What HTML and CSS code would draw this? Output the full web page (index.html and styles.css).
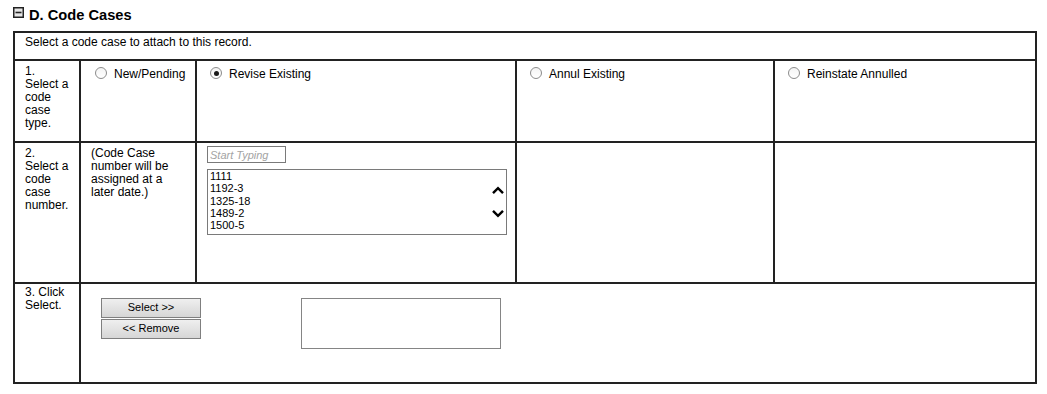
FILE: index.html
```html
<!DOCTYPE html>
<html>
<head>
<meta charset="utf-8">
<link rel="stylesheet" href="styles.css">
</head>
<body>
<div class="heading">
  <svg class="toggle" width="11" height="11" viewBox="0 0 11 11"><rect x="0.75" y="0.75" width="9.5" height="9.5" fill="#e6e6e6" stroke="#222" stroke-width="1.5"/><line x1="2.5" y1="5.5" x2="8.5" y2="5.5" stroke="#222" stroke-width="1.6"/></svg>
  <span>D. Code Cases</span>
</div>
<div class="grid">
  <div class="cell intro">Select a code case to attach to this record.</div>

  <div class="cell label">1.<br>Select a<br>code<br>case<br>type.</div>
  <div class="cell opt first"><label class="radio"><span class="dot"></span><span class="txt">New/Pending</span></label></div>
  <div class="cell opt"><label class="radio"><span class="dot checked"></span><span class="txt">Revise Existing</span></label></div>
  <div class="cell opt"><label class="radio"><span class="dot"></span><span class="txt">Annul Existing</span></label></div>
  <div class="cell opt"><label class="radio"><span class="dot"></span><span class="txt">Reinstate Annulled</span></label></div>

  <div class="cell label">2.<br>Select a<br>code<br>case<br>number.</div>
  <div class="cell label note">(Code Case<br>number will be<br>assigned at a<br>later date.)</div>
  <div class="cell pick">
    <input class="search" type="text" placeholder="Start Typing">
    <div class="list">
      <div class="items">
        <div>1111</div>
        <div>1192-3</div>
        <div>1325-18</div>
        <div>1489-2</div>
        <div>1500-5</div>
      </div>
      <div class="arrows">
        <svg width="12" height="9" viewBox="0 0 12 9"><polyline points="1,7.2 6,2.2 11,7.2" fill="none" stroke="#000" stroke-width="2.4"/></svg>
        <svg width="12" height="9" viewBox="0 0 12 9"><polyline points="1,1.8 6,6.8 11,1.8" fill="none" stroke="#000" stroke-width="2.4"/></svg>
      </div>
    </div>
  </div>
  <div class="cell"></div>
  <div class="cell"></div>

  <div class="cell label step3">3. Click<br>Select.</div>
  <div class="cell actions">
    <div class="buttons">
      <div class="btn">Select &gt;&gt;</div>
      <div class="btn">&lt;&lt; Remove</div>
    </div>
    <div class="selected"></div>
  </div>
</div>
</body>
</html>
```
FILE: styles.css
```css
body {
  margin: 0;
  background: #fff;
  color: #000;
  font-family: "Liberation Sans", Arial, sans-serif;
  font-size: 12px;
  line-height: 13px;
}

.heading {
  display: flex;
  align-items: flex-start;
  gap: 5px;
  height: 18px;
  padding: 6px 0 0 13px;
  font-size: 14.67px;
  font-weight: bold;
  line-height: 18px;
}

.toggle {
  margin-top: 1px;
  flex: none;
}

.grid {
  display: grid;
  grid-template-columns: 66px 116px 320px 258px 262px;
  grid-template-rows: 28px 82px 141px 100px;
  width: max-content;
  margin: 7px 0 0 13px;
  border-top: 2px solid #222;
  border-left: 2px solid #222;
}

.cell {
  box-sizing: border-box;
  border-right: 2px solid #222;
  border-bottom: 2px solid #222;
  padding: 4px 10px 0;
}

.intro {
  grid-column: 1 / -1;
  padding-top: 3px;
}

.label {
  white-space: nowrap;
}

.step3 {
  padding-top: 2px;
}

.opt {
  padding: 6px 0 0 13px;
}

.opt.first {
  padding-left: 14px;
}

.radio {
  display: flex;
  align-items: flex-start;
  gap: 7px;
  white-space: nowrap;
}

.radio .txt {
  padding-top: 1px;
}

.dot {
  position: relative;
  flex: none;
  box-sizing: border-box;
  width: 12px;
  height: 12px;
  border: 1px solid #8c8c8c;
  border-radius: 50%;
  background: linear-gradient(#f4f4f4, #ffffff);
}

.dot.checked::after {
  content: "";
  position: absolute;
  left: 2.5px;
  top: 2.5px;
  width: 5px;
  height: 5px;
  border-radius: 50%;
  background: #1a1a1a;
}

.pick {
  padding: 3px 10px 0;
}

.search {
  display: block;
  box-sizing: border-box;
  width: 79px;
  height: 17px;
  margin: 0;
  padding: 0 2px;
  border: 1px solid #7a7a7a;
  border-radius: 0;
  font-family: "Liberation Sans", Arial, sans-serif;
  font-size: 11px;
  outline: none;
}

.search::placeholder {
  color: #a3a3a3;
  font-style: italic;
}

.list {
  display: flex;
  box-sizing: border-box;
  width: 300px;
  height: 66px;
  margin-top: 6px;
  border: 1px solid #7a7a7a;
  font-size: 11px;
  line-height: 12.3px;
}

.items {
  flex: 1;
  padding-left: 2px;
}

.arrows {
  display: flex;
  flex-direction: column;
  gap: 14px;
  padding: 16px 2px 0 0;
}

.actions {
  grid-column: 2 / -1;
  display: flex;
  align-items: flex-start;
  padding: 14px 0 0 20px;
}

.buttons {
  display: flex;
  flex-direction: column;
  gap: 1px;
  width: 100px;
}

.btn {
  box-sizing: border-box;
  height: 20px;
  border: 1px solid #7f7f7f;
  background: linear-gradient(#efefef, #d6d6d6);
  font-size: 11px;
  line-height: 16px;
  text-align: center;
}

.selected {
  box-sizing: border-box;
  width: 200px;
  height: 51px;
  margin-left: 100px;
  border: 1px solid #858585;
}
```
